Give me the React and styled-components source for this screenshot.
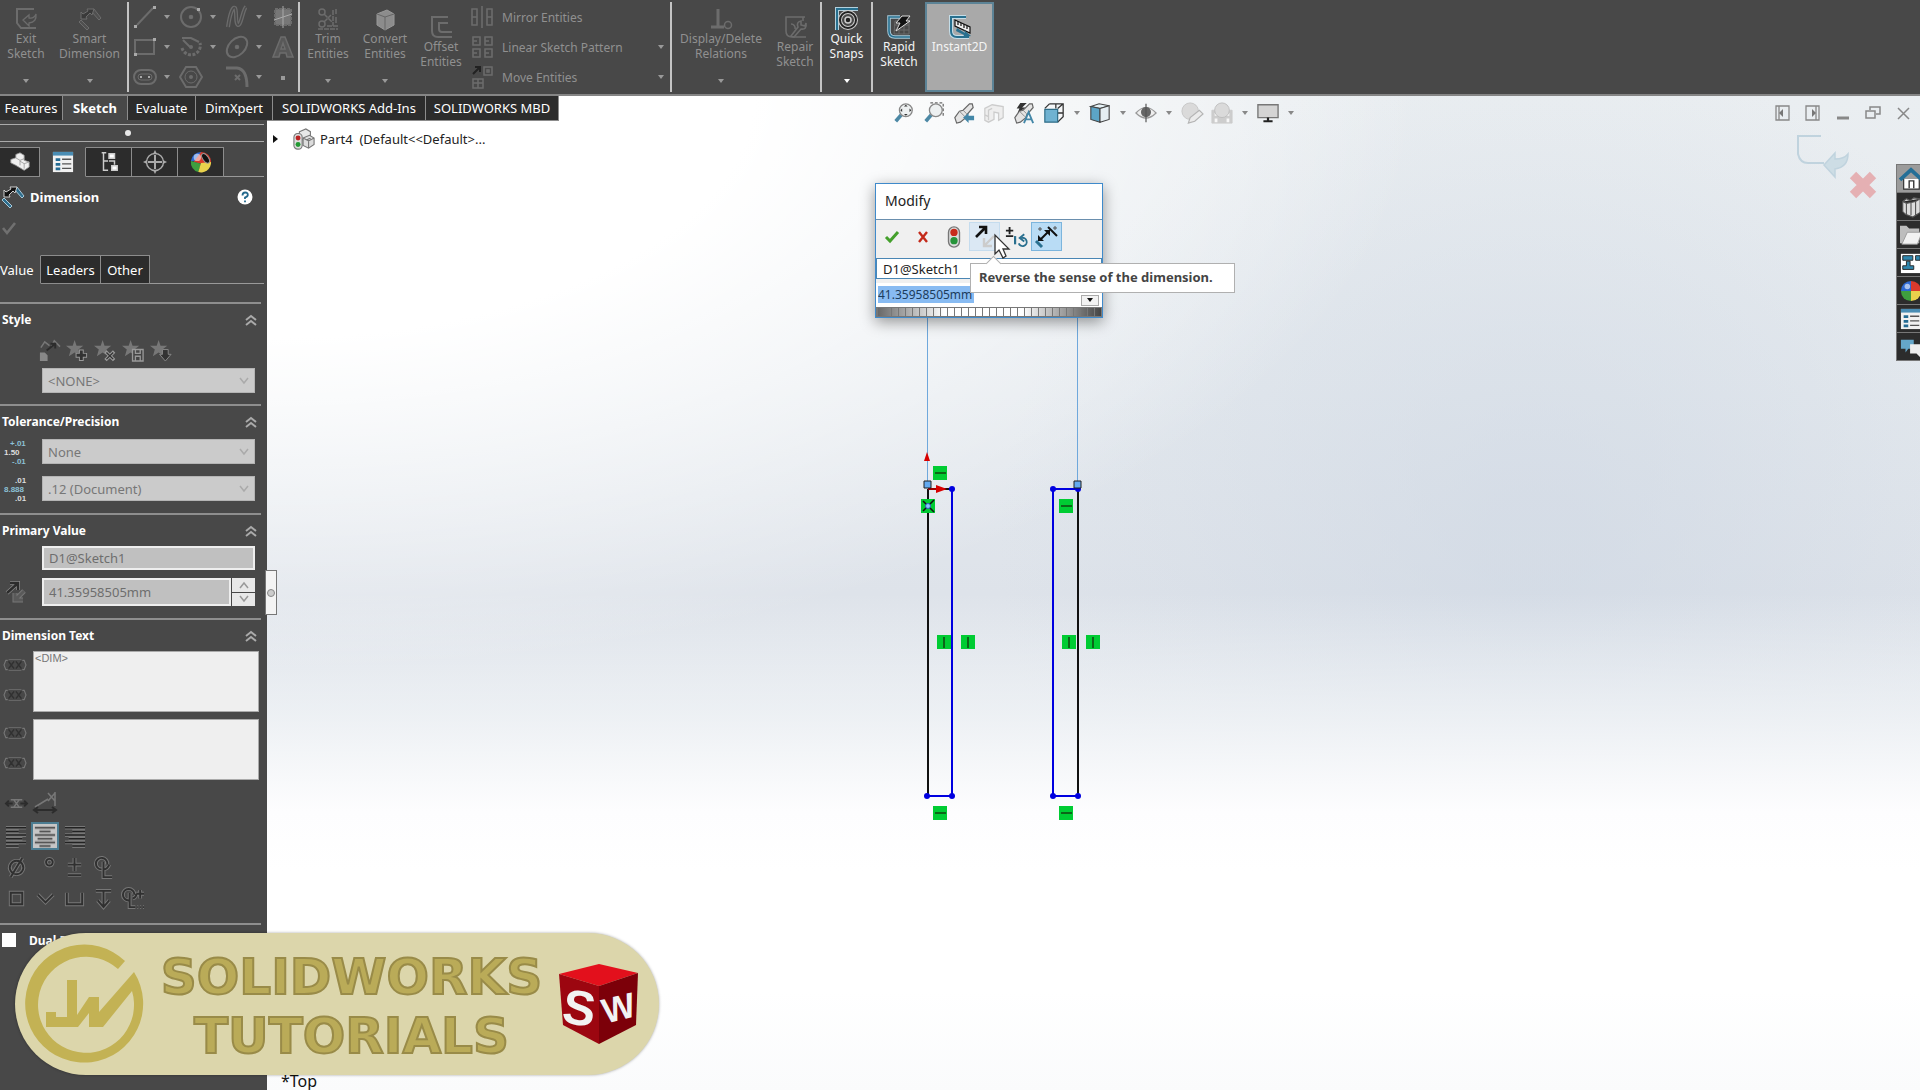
import React from "react";
import styled, { createGlobalStyle } from "styled-components";

const GlobalStyle = createGlobalStyle`
  * {
    box-sizing: border-box;
  }

  body {
    margin: 0;
    overflow: hidden;
    font-family: "Noto Sans", "Open Sans", sans-serif;
    font-size: 13px;
    color: #fff;
  }

  button {
    padding: 0;
    border: 0;
    background: none;
    color: inherit;
    font: inherit;
  }

  svg {
    display: block;
    flex: none;
    overflow: visible;
  }
`;

const Page = styled.div`
  display: flex;
  flex-direction: column;
  min-height: 100vh;
  position: relative;
`;

/* ---------- ribbon ---------- */

const Ribbon = styled.header`
  display: flex;
  height: 96px;
  padding: 2px 0;
  background: #484848;
  border-bottom: 2px solid #858585;
  font-size: 12px;
  line-height: 15px;
`;

const Divider = styled.div`
  width: 2px;
  height: 90px;
  background: #c4c4c4;
`;

const BigTool = styled.button`
  display: flex;
  flex-direction: column;
  align-items: center;
  width: ${(p) => p.$width}px;
  height: 90px;
  padding-top: ${(p) => (p.$low ? 13 : 5)}px;
  color: ${(p) => (p.$enabled ? "#f4f4f4" : "#909090")};
  text-align: center;
  white-space: pre-line;
  ${(p) => p.$pressed && "background: #a9a9a9; border: 2px solid #5c8396; padding-top: 11px;"}
`;

const BigToolArrow = styled.span`
  display: flex;
  margin-top: auto;
  padding-bottom: 8px;
`;

const ToolGrid = styled.div`
  display: grid;
  grid-template-columns: 46px 46px 46px 28px;
  grid-template-rows: repeat(3, 30px);
  width: 169px;
  padding-left: 4px;
`;

const GridTool = styled.button`
  display: flex;
  align-items: center;
  gap: 6px;
`;

const ToolList = styled.div`
  display: grid;
  grid-template-rows: repeat(3, 30px);
  width: 202px;
  padding-left: 2px;
`;

const ListTool = styled.button`
  display: flex;
  align-items: center;
  gap: 8px;
  padding-right: 5px;
  color: #909090;

  & > span {
    flex: 1;
    text-align: left;
  }
`;

/* ---------- command tabs and heads-up toolbar ---------- */

const Main = styled.main`
  flex: 1;
  display: flex;
  flex-direction: column;
  background:
    radial-gradient(ellipse 60% 58% at 14% 0%, #fff 42%, rgba(255, 255, 255, 0) 100%),
    linear-gradient(180deg, rgba(255, 255, 255, 0) 50%, rgba(240, 243, 246, 0.8) 62%, #fdfdfe 72%, #fff 78%, #fff 90%, #fafbfc 100%),
    radial-gradient(ellipse 28% 50% at 80% 45%, rgba(206, 215, 227, 0.6) 10%, rgba(206, 215, 227, 0) 100%),
    linear-gradient(180deg, #eaeef1 0%, #e4e9ee 30%, #dee3ea 50%, #e0e5eb 100%);
`;

const TopRow = styled.div`
  display: grid;
  grid-template-columns: 267px 1fr;
  height: 24px;
`;

const CommandTabs = styled.nav`
  display: flex;
  width: max-content;
  height: 25px;
  position: relative;
`;

const CommandTab = styled.button`
  width: ${(p) => p.$width}px;
  border: 1px solid #8c8c8c;
  border-width: 0 1px 1px 0;
  background: ${(p) => (p.$active ? "#484848" : "#2c2c2c")};
  border-bottom-color: ${(p) => (p.$active ? "#484848" : "#8c8c8c")};
  font-weight: ${(p) => (p.$active ? 700 : 400)};
  white-space: nowrap;
`;

const ViewBar = styled.div`
  display: grid;
  grid-template-columns: 1fr auto 1fr;
  padding-top: 6px;
  height: 28px;
`;

const HeadsUp = styled.div`
  grid-column: 2;
  display: flex;
  align-items: center;
  gap: 8px;
  height: 22px;
`;

const HeadsUpButton = styled.button`
  display: flex;
  align-items: center;
  gap: 8px;
`;

const WindowButtons = styled.div`
  display: flex;
  align-items: center;
  justify-content: flex-end;
  gap: 12px;
  height: 22px;
  padding-right: 8px;
`;

const Workspace = styled.div`
  flex: 1;
  display: flex;
`;

/* ---------- property manager ---------- */

const Panel = styled.aside`
  position: relative;
  width: 267px;
  padding-top: 4px;
  background: #484848;
`;

const Grip = styled.div`
  display: flex;
  align-items: center;
  justify-content: center;
  height: 18px;
  margin: 0 3px 5px 0;
  padding-right: 8px;
  border: solid #aaa;
  border-width: 1px 0;

  &::after {
    content: "";
    width: 6px;
    height: 6px;
    border-radius: 50%;
    background: #e8e8e8;
  }
`;

const TabStrip = styled.div`
  display: flex;
  height: ${(p) => p.$height}px;
  margin-right: 3px;

  &::after {
    content: "";
    flex: 1;
    border-bottom: 1px solid #999;
  }
`;

const PanelTab = styled.button`
  display: flex;
  align-items: center;
  justify-content: center;
  width: ${(p) => p.$width}px;
  border: 1px solid #8c8c8c;
  border-left: 0;
  background: ${(p) => (p.$active ? "#484848" : "#2c2c2c")};
  ${(p) => p.$active && "border-top-color: transparent; border-bottom-color: transparent;"}
`;

const ValueTab = styled(PanelTab)`
  ${(p) => p.$active && "justify-content: flex-start;"}
`;

const TitleRow = styled.div`
  display: flex;
  align-items: center;
  gap: 5px;
  height: 40px;
  padding: 0 14px 0 1px;
  font-weight: 700;

  h2 {
    flex: 1;
    margin: 0;
    font-size: 13px;
  }
`;

const ConfirmRow = styled.div`
  height: 38px;
  padding: 4px 2px;
`;

const Section = styled.section`
  margin-right: 6px;
  height: ${(p) => p.$height}px;
  border-top: 2px solid #8e8e8e;
`;

const SectionHead = styled.button`
  display: flex;
  align-items: center;
  justify-content: space-between;
  width: 100%;
  height: 31px;
  padding: 0 2px;
  font-size: 12px;
  font-weight: 700;
`;

const IconRow = styled.div`
  display: flex;
  align-items: center;
  gap: ${(p) => p.$gap || 5}px;
  height: ${(p) => p.$height || 30}px;
  padding-left: ${(p) => p.$indent || 0}px;
`;

const Field = styled.div`
  display: flex;
  align-items: center;
  gap: 14px;
  margin: ${(p) => p.$before || 0}px 6px ${(p) => p.$after || 12}px 4px;

  & > svg {
    width: 24px;
  }
`;

const SelectBox = styled.div`
  position: relative;
  flex: 1;

  svg {
    position: absolute;
    right: 5px;
    top: 9px;
    pointer-events: none;
  }
`;

const Select = styled.select`
  display: block;
  width: 100%;
  height: 25px;
  padding: 0 5px;
  appearance: none;
  border: 1px solid #b4b4b4;
  border-radius: 0;
  background: #cbcbcb;
  color: #777;
  font: inherit;
`;

const ValueInput = styled.input`
  flex: 1;
  min-width: 0;
  width: 100%;
  height: ${(p) => (p.$tall ? 28 : 24)}px;
  padding: 0 5px;
  border: 2px solid #eee;
  background: #c0c0c0;
  color: #6e6e6e;
  font: inherit;
`;

const Spinner = styled.div`
  display: flex;
  flex: 1;
`;

const SpinButtons = styled.div`
  display: flex;
  flex-direction: column;
  gap: 1px;
  width: 24px;
  padding-left: 1px;

  button {
    display: flex;
    flex: 1;
    align-items: center;
    justify-content: center;
    background: #e8e8e8;
  }
`;

const TextBlock = styled.div`
  display: flex;
  gap: 7px;
  height: 61px;
  margin: 0 2px 7px 4px;
`;

const TextBlockIcons = styled.div`
  display: flex;
  flex-direction: column;
  gap: 8px;
  width: 22px;
  padding-top: 3px;
`;

const DimTextArea = styled.textarea`
  flex: 1;
  min-width: 0;
  padding: 0 1px;
  resize: none;
  border: 1px solid #aaa;
  background: #efefef;
  color: #777;
  font: 11px/13px "Liberation Sans", Arial, sans-serif;
`;

const SymbolButton = styled.button`
  display: flex;
  align-items: center;
  justify-content: center;
  width: ${(p) => p.$width || 24}px;
  height: 28px;
  ${(p) => p.$pressed && "background: #c6c6c6; border: 2px solid #4c7d92;"}
`;

const CheckLabel = styled.label`
  display: flex;
  align-items: center;
  gap: 13px;
  height: 30px;
  padding-left: 2px;
  font-size: 12px;
  font-weight: 700;

  input {
    width: 14px;
    height: 14px;
    margin: 0;
    appearance: none;
    background: #fff;
  }
`;

const PanelHandle = styled.button`
  position: absolute;
  top: 450px;
  right: -10px;
  z-index: 1;
  display: flex;
  align-items: center;
  justify-content: center;
  width: 12px;
  height: 45px;
  border: 1px solid #777;
  background: #f4f4f4;

  &::after {
    content: "";
    width: 6px;
    height: 6px;
    border: 1px solid #888;
    border-radius: 50%;
    background: #ccc;
  }
`;

/* ---------- graphics area ---------- */

const Viewport = styled.div`
  position: relative;
  flex: 1;
`;

const TreeRoot = styled.button`
  display: flex;
  align-items: center;
  height: 38px;
  padding-left: 6px;
  color: #222;
  white-space: pre;

  span {
    padding-left: 5px;
  }

  svg + svg {
    margin-left: 14px;
  }
`;

const SketchDrawing = styled.svg`
  position: absolute;
  left: 633px;
  top: 190px;
`;

const ViewName = styled.div`
  position: absolute;
  left: 14px;
  bottom: 0;
  color: #111;
  font-size: 16px;
  line-height: 18px;
`;

const ConfirmCorner = styled.div`
  position: absolute;
  right: 42px;
  top: 14px;
`;

const TaskPane = styled.div`
  position: absolute;
  right: 0;
  top: 44px;
  width: 24px;
  border: 1px solid #777;
  border-right: 0;
  background: #777;
  display: grid;
  gap: 1px;
`;

const TaskButton = styled.button`
  display: flex;
  align-items: center;
  height: 27px;
  padding-left: 3px;
  overflow: hidden;
  background: ${(p) => (p.$active ? "#9b9b9b" : "#2c2c2c")};
`;

const Dialog = styled.form`
  position: absolute;
  left: 608px;
  top: 63px;
  width: 228px;
  border: 1px solid #3f8acb;
  background: #f0f0f0;
  box-shadow: 0 4px 14px rgba(0, 0, 0, 0.4);
  color: #222;
`;

const DialogTitle = styled.div`
  height: 36px;
  padding-left: 9px;
  border-bottom: 1px solid #6a8fae;
  background: #fff;
  font-size: 14px;
  line-height: 34px;
`;

const DialogTools = styled.div`
  display: flex;
  align-items: center;
  height: 38px;
  padding-bottom: 5px;
`;

const DialogTool = styled.button`
  display: flex;
  align-items: center;
  justify-content: center;
  width: 31px;
  height: 29px;
  background: ${(p) => p.$fill || "none"};
  border: 1px solid ${(p) => p.$edge || "transparent"};
`;

const DialogInput = styled.input`
  display: block;
  width: 100%;
  height: 21px;
  padding: 0 6px;
  border: 1px solid #4a86b4;
  background: #fff;
  color: #222;
  font: inherit;
  line-height: 19px;
`;

const ValueRow = styled.div`
  display: flex;
  align-items: flex-end;
  height: 24px;
  margin-top: 4px;
  background: #fff;
`;

const SelectedInput = styled.input`
  width: 96px;
  height: 17px;
  margin: 0 auto 4px 2px;
  padding: 0;
  border: 0;
  background: #88bbf2;
  color: #1c3c5c;
  font: inherit;
  font-size: 12px;
`;

const DropButton = styled.button`
  display: flex;
  align-items: center;
  justify-content: center;
  width: 18px;
  height: 11px;
  margin: 0 3px 1px 0;
  border: 1px solid #aaa;
  background: #f2f2f2;
`;

const Thumbwheel = styled.div`
  height: 10px;
  border: 1px solid #777;
  background:
    repeating-linear-gradient(90deg, #777 0 1px, transparent 1px 7px),
    linear-gradient(90deg, #666, #fff 30%, #fff 65%, #444);
`;

const Tooltip = styled.div`
  position: absolute;
  left: 703px;
  top: 143px;
  width: 265px;
  height: 30px;
  padding-left: 8px;
  border: 1px solid #b0b0b0;
  background: #fff;
  color: #444;
  font-size: 13px;
  font-weight: 700;
  line-height: 26px;
  white-space: nowrap;

  &::before {
    content: "";
    position: absolute;
    left: 17px;
    top: -6px;
    width: 10px;
    height: 10px;
    border: solid #b0b0b0;
    border-width: 1px 0 0 1px;
    background: #fff;
    transform: rotate(45deg);
  }
`;

const Cursor = styled.svg`
  position: absolute;
  left: 727px;
  top: 114px;
`;

/* ---------- channel banner ---------- */

const Banner = styled.div`
  position: absolute;
  left: 15px;
  bottom: 15px;
  z-index: 2;
  display: flex;
  align-items: center;
  width: 644px;
  height: 142px;
  padding: 0 18px 0 11px;
  border-radius: 71px;
  background: #dcd6ab;
  box-shadow: 0 0 3px rgba(0, 0, 0, 0.35);
`;

const BannerText = styled.div`
  flex: 1;
  padding-top: 6px;
  color: #baab58;
  font: 700 50px/59px "DejaVu Sans", sans-serif;
  text-align: center;
  -webkit-text-stroke: 2px #998b48;
`;

/* ---------- icons ---------- */

const Icon = ({ size = 24, w, h, box = "0 0 24 24", color = "#777", line = 2, children }) => (
  <svg
    width={w || size}
    height={h || size}
    viewBox={box}
    fill="none"
    stroke={color}
    strokeWidth={line}
    aria-hidden="true"
  >
    {children}
  </svg>
);

const Caret = ({ color = "#999" }) => (
  <Icon w={8} h={5} box="0 0 8 5">
    <path d="M1 0h6L4 4z" fill={color} stroke="none" />
  </Icon>
);

const Collapse = () => (
  <Icon w={16} h={14} box="0 0 16 14" color="#aaa" line={2}>
    <path d="M3 7l5-4 5 4M3 12l5-4 5 4" />
  </Icon>
);

const Chevron = ({ up, color = "#aaa" }) => (
  <Icon w={12} h={8} box="0 0 12 8" color={color} line={1.5}>
    <path d={up ? "M2 7l4-5 4 5" : "M2 1l4 5 4-5"} />
  </Icon>
);

const dim = "#6c6c6c";

const ExitIcon = () => (
  <Icon color={dim}>
    <path d="M20 2H3v14l4 5h15" />
    <path d="M9 13l6-5v3q5 1 7-4 1 8-7 9v3z" strokeWidth="1.3" />
  </Icon>
);

const DimensionIcon = ({ blue }) => (
  <Icon color={blue ? "#a9c9da" : dim} line={1}>
    <path d="M1 15l2-2 8 8-2 2zM13 4l3-2 7 9-2 2z" fill={blue ? "#2d6d8c" : "#505050"} />
    <path
      d="M3 12V5l2 2 5-3-1-2h7l-2 6-2-2-4 4 1 2z"
      fill={blue ? "#111" : "#3a3a3a"}
      stroke={blue ? "#ccc" : "#6c6c6c"}
    />
  </Icon>
);

const gridIcons = [
  ["Line", true, <><path d="M4 20L20 3" /><path d="M1 20h3v3H1zM20 1h3v3h-3z" fill="#aaa" stroke="none" /></>],
  ["Circle", true, <><circle cx="12" cy="12" r="10" /><circle cx="12" cy="12" r="1.3" fill="#aaa" /><path d="M18 3h3v3h-3z" fill="#aaa" stroke="none" /></>],
  ["Spline", true, <><path d="M3 22C5 8 8 1 10 3s0 16 3 17S18 4 21 2" strokeWidth="4" /><path d="M3 22C5 8 8 1 10 3s0 16 3 17S18 4 21 2" stroke="#4c4c4c" strokeWidth="1.5" /></>],
  ["Sketch plane", false, <><path d="M4 4h16v16H4z" fill="#777" strokeDasharray="3 1" /><path d="M12 1v22M3 15l18-6" stroke="#aaa" strokeWidth="1" /></>],
  ["Rectangle", true, <><path d="M2 5h19v14H2z" /><path d="M1 18h3v3H1zM20 3h3v3h-3z" fill="#aaa" stroke="none" /></>],
  ["Arc", true, <><path d="M3 13a9 9 0 1 0 18-5" strokeDasharray="3 1.5" strokeWidth="3" /><path d="M3 3h9l8 4M4 5l7 7" /><circle cx="12" cy="12" r="1" /></>],
  ["Ellipse", true, <><ellipse cx="12" cy="12" rx="12" ry="8" transform="rotate(-45 12 12)" /><circle cx="12" cy="12" r="1.3" fill="#aaa" /></>],
  ["Text", false, <path d="M2 22l8-20h4l8 20h-6l-1-4H9l-1 4zM10 14h4l-2-6z" fill="#585858" strokeWidth="1.5" />],
  ["Slot", true, <><rect x="1" y="5" width="22" height="14" rx="7" /><rect x="5" y="9" width="14" height="6" rx="3" strokeWidth="1" /><path d="M7 12h2M15 12h2" stroke="#aaa" /></>],
  ["Polygon", false, <><path d="M7 2h10l6 10-6 10H7L1 12z" /><circle cx="12" cy="12" r="6" strokeWidth="1" /><circle cx="12" cy="12" r="1" fill="#aaa" /></>],
  ["Fillet", true, <><path d="M1 3h11q10 1 10 19" strokeWidth="3" /><path d="M10 10l5 5m0-5l-5 5" /></>],
  ["Point", false, <path d="M10 11h4v4h-4z" fill="#999" stroke="none" />],
];

const listIcons = [
  ["Mirror Entities", false, <path d="M12 1v22M2 4h5v16H2zM2 12h5M22 4h-5v16h5zM22 12h-5" strokeWidth="1.6" />],
  ["Linear Sketch Pattern", true, <path d="M10 2H3v8h7zM3 6h4M22 2h-7v8h7zM15 6h4M10 14H3v8h7zM3 18h4M22 14h-7v8h7zM15 18h4" strokeWidth="1.6" />],
  ["Move Entities", true, <><path d="M3 9l7-7M5 2h5v5" stroke="#222" /><path d="M14 2h8v8h-8zM17 5h2v2h-2zM3 14h10v9H3zM3 18h10M8 14v9" strokeWidth="1.5" /></>],
];

const commandTabs = [
  ["Features", 63],
  ["Sketch", 65],
  ["Evaluate", 68],
  ["DimXpert", 77],
  ["SOLIDWORKS Add-Ins", 153],
  ["SOLIDWORKS MBD", 133],
];

const Lens = () => (
  <>
    <path d="M9 14l-6 7" stroke="#4c88a5" strokeWidth="4" />
    <circle cx="14" cy="9" r="7" fill="#edf0f1" stroke="#888" strokeWidth="1.4" />
  </>
);

const Telescope = () => (
  <>
    <path d="M2 17l5-7 4-1 7-7h3l1 4-7 8-1 3-6 5-4 1z" fill="#e4e4e4" stroke="#666" strokeWidth="1.3" />
    <path d="M7 10l6 6M11 9l4 4" stroke="#888" strokeWidth="1" />
  </>
);

const headsUpIcons = [
  ["Zoom to fit", false, <><Lens /><path d="M14 3l2 2h-4zM14 15l2-2h-4zM8 9l2-2v4zM20 9l-2-2v4z" fill="#333" stroke="none" /></>],
  ["Zoom to area", false, <><path d="M8 1h14v15" stroke="#333" strokeWidth="1" strokeDasharray="3 2" /><Lens /></>],
  ["Previous view", false, <><Telescope /><path d="M11 17l6-5v3h6v5h-6v3z" fill="#4387a8" stroke="none" /></>],
  ["Section view", false, <path d="M2 7l8-4 12 2v12l-5 3v-8l-5-1v8l-6 3-4-2zM2 14l4 2m0 4V9l4-2" fill="#eee" stroke="#ccc" strokeWidth="1.4" />],
  ["View annotations", false, <><path d="M8 1h7l-5 5h4l-9 6 2-5H4z" fill="#333" stroke="none" /><Telescope /><path d="M12 23l5-12 5 12M14 19h6" stroke="#4387a8" /></>],
  ["View orientation", true, <><path d="M7 2h15v14l-6 6M7 2L2 7M22 2l-6 5M14 2v5M16 12h6" stroke="#333" strokeWidth="1.4" /><path d="M2 8h14v14H2z" fill="#70b2d1" stroke="#2e6c87" strokeWidth="1.3" /></>],
  ["Display style", true, <><path d="M2 5l9-3 11 2-10 3z" fill="#e6f2f7" stroke="#444" strokeWidth="1.2" /><path d="M2 5l10 2v15L2 19z" fill="#5ca4c6" stroke="#444" strokeWidth="1.2" /><path d="M12 7l10-3v15l-10 3z" fill="#e5eef3" stroke="#444" strokeWidth="1.2" /></>],
  ["Hide or show items", true, <><path d="M1 12q11-12 22 0-11 11-22 0z" fill="#eee" stroke="#999" strokeWidth="1.3" /><circle cx="12" cy="11" r="5.5" fill="#666" stroke="none" /><path d="M12 2v20" stroke="#555" strokeWidth="1.3" /></>],
  ["Edit appearance", false, <><circle cx="10" cy="10" r="9" fill="#dadada" stroke="#c6c6c6" strokeWidth="1" /><path d="M8 23l2-6 10-8 4 4-9 8z" fill="#ebebeb" stroke="#b4b4b4" strokeWidth="1.3" /></>],
  ["Apply scene", true, <><path d="M1 9h22v14H1z" fill="#cdcdcd" stroke="#ccc" strokeWidth="1" /><path d="M4 12h3v3H4zM17 12h3v3h-3zM4 18h3v4H4zM17 18h3v4h-3z" fill="#f7f7f7" stroke="none" /><circle cx="12" cy="9" r="8" fill="#dadada" stroke="#bdbdbd" strokeWidth="1" /></>],
  ["View settings", true, <><path d="M1 3h22v14H1z" fill="#d4d4d4" stroke="#777" strokeWidth="1.5" /><path d="M12 17v4M7 21h10" stroke="#222" strokeWidth="2.4" /></>],
];

const Ball = () => (
  <Icon size={22} line={0}>
    <path d="M12 12V1A11 11 0 0 0 1 12z" fill="#2d68d2" />
    <path d="M12 12V1a11 11 0 0 1 11 11z" fill="#d93a2c" />
    <path d="M12 12H1a11 11 0 0 0 11 11z" fill="#3f9e3f" />
    <path d="M12 12h11a11 11 0 0 1-11 11z" fill="#e9d24c" />
    <circle cx="8" cy="7" r="3" fill="#fff" opacity=".6" />
  </Icon>
);

const DisplayBall = () => (
  <Icon size={22} line={0}>
    <path d="M12 12L12 1A11 11 0 0 0 1 11z" fill="#2d68d2" />
    <path d="M12 1a11 11 0 0 1 11 11l-11 2-8-2z" fill="#d93a2c" />
    <path d="M12 14L1 11a11 11 0 0 0 8 12z" fill="#3f9e3f" />
    <path d="M12 13l11-1a11 11 0 0 1-14 11z" fill="#e9d24c" />
    <circle cx="8" cy="7" r="4" fill="#fff" opacity=".55" />
    <ellipse cx="17" cy="8" rx="3" ry="6" fill="#111" stroke="#999" strokeWidth="1" transform="rotate(-35 17 8)" />
  </Icon>
);

const ListIcon = () => (
  <Icon size={22} line={0}>
    <path d="M1 1h22v22H1z" fill="#f1f1f1" />
    <path d="M1 1h22v4H1z" fill="#4a8db4" />
    <path d="M4 8h5v3H4zM4 13h5v3H4zM4 18h5v3H4z" fill="#246b93" />
    <path d="M11 9h10M11 14h10M11 19h10" stroke="#555" strokeWidth="1.5" />
  </Icon>
);

const panelTabs = [
  ["Design tree", 40, <Icon size={20} color="#999" line={1}><path d="M1 9l6-2V3l5-2 5 3v6l6 2v6l-6 4-10-6-6-3z" fill="#efefef" /><path d="M7 7l5 3v6M12 10l5-2M17 20v-6l6-2M17 14l-5-3" /></Icon>],
  ["Properties", 46, <ListIcon />],
  ["Configurations", 46, <Icon size={22} color="#ccc" line={1.6}><path d="M4 2h5M6 2v19h5M6 11h5" /><path d="M12 3h6v5h-6zM15 16h6v5h-6z" fill="#fff" /><path d="M12 11h6v4" /></Icon>],
  ["DimXpert manager", 46, <Icon size={24} color="#aaa" line={1.4}><circle cx="12" cy="12" r="8.5" /><path d="M12 5v14M5 12h14" strokeWidth="2" /><path d="M12 0l2 4h-4zM12 24l2-4h-4zM0 12l4-2v4zM24 12l-4-2v4z" fill="#aaa" stroke="none" /></Icon>],
  ["Display manager", 46, <DisplayBall />],
];

const star = "M9 1l2 6h7l-5 4 2 7-6-4-6 4 2-7-5-4h7z";

const styleIcons = [
  ["Apply default", <><path d="M3 9l4-6 5 4M14 8l3-6 6 6" strokeWidth="1.6" /><path d="M9 12l9-7M13 5h5v5" stroke="#2c2c2c" /><path d="M2 14h5l3 3v6H2z" fill="#888" stroke="none" /></>],
  ["Add style", <><path d={star} fill="#777" stroke="none" /><path d="M16 11v12M10 17h12" stroke="#999" strokeWidth="5" /><path d="M16 12v10M11 17h10" stroke="#333" strokeWidth="3" /></>],
  ["Delete style", <><path d={star} fill="#777" stroke="none" /><path d="M12 13l9 9m0-9l-9 9" stroke="#999" strokeWidth="3.5" /><path d="M13 14l7 7m0-7l-7 7" stroke="#333" strokeWidth="1.4" /></>],
  ["Save style", <><path d={star} fill="#777" stroke="none" /><path d="M11 11h11v12H11zM14 11v4h5v-4M14 23v-5h5v5" fill="#444" stroke="#999" strokeWidth="1.4" /></>],
  ["Load style", <><path d={star} fill="#777" stroke="none" /><path d="M13 11h6v5h3l-6 7-6-7h3z" fill="#333" stroke="#888" strokeWidth="1" /></>],
];

const BracketIcon = () => (
  <Icon size={22} line={1.2}>
    <path d="M4 7H2L0 12l2 5h2M20 7h2l2 5-2 5h-2" />
    <path d="M5 8l6 8m0-8l-6 8M13 8l6 8m0-8l-6 8" stroke="#303030" strokeWidth="1.6" />
    <path d="M5 6h14M5 18h14" stroke="#666" />
  </Icon>
);

const alignIcons = [
  ["Align left", false, "M1 3h22M1 7h14M1 11h22M1 15h18M1 19h22M1 23h14"],
  ["Align centre", true, "M1 3h22M6 7h12M1 11h22M4 15h16M1 19h22M6 23h12"],
  ["Align right", false, "M1 3h22M9 7h14M1 11h22M5 15h18M1 19h22M9 23h14"],
];

const symbolRows = [
  [
    ["Diameter", "M12 5a7 7 0 1 0 .1 0zM6 22L18 2"],
    ["Degree", "M16 3a3.5 3.5 0 1 0 .1 0z"],
    ["Plus minus", "M12 2v14M5 9h14M5 20h14"],
    ["Centerline", "M16 9a6 6 0 1 0-6 5M12 6v16h9M12 14q4 0 6-5"],
  ],
  [
    ["Square", "M6 6h12v12H6z"],
    ["Countersink", "M4 8l8 8 8-8"],
    ["Counterbore", "M4 6v12h16V6"],
    ["Depth", "M4 4h16M12 4v17M6 14l6 7 6-7"],
    ["More symbols", "M14 8a6 6 0 1 0-6 6M9 6v15h6M12 12q4-1 4-5M20 3v9M16 7h8M17 21h1M20 21h1M23 21h1"],
  ],
];

const Symbol = ({ d }) => (
  <Icon size={23}>
    <path d={d} stroke="#777" strokeWidth="4" />
    <path d={d} stroke="#303030" strokeWidth="2" />
  </Icon>
);

const taskIcons = [
  ["Home", <><path d="M4 12v11h17V12" fill="#fff" stroke="#333" strokeWidth="1.3" /><path d="M0 13L12 2l12 11" stroke="#246f97" strokeWidth="4" /><path d="M10 22v-8h5v8" stroke="#333" strokeWidth="1.5" /></>],
  ["Library", <path d="M3 6l4-3 4 2 4-3 7 1v15l-8 5-8-3-3-3zM7 8v12M12 7v14M17 6v15M3 6l4 2 5-1 5-1 5-3" fill="#ddd" stroke="#555" strokeWidth="1.2" />],
  ["Explorer", <><path d="M0 2h7l3 3h11v16H0z" fill="#bdbdbd" stroke="none" /><path d="M8 9h16l-5 13H2z" fill="#f2f2f2" stroke="#999" strokeWidth="1" /></>],
  ["View palette", <><path d="M1 2h22v21H1z" fill="#fff" stroke="none" /><path d="M3 4h11v5H3zM17 4h5v5h-5zM7 10h4v5h4v4H3v-4h4z" fill="#2f86ad" stroke="#222" strokeWidth="1" /></>],
];

const ArrowsIcon = () => (
  <Icon>
    <path d="M20 11L12 19M11 13v7h8" stroke="#777" strokeWidth="5" />
    <path d="M20 11L12 19M11 13v7h8" stroke="#5a5a5a" strokeWidth="3" />
    <path d="M3 13L13 4M6 3h8v7" stroke="#888" strokeWidth="4" />
    <path d="M3 13L13 4M6 3h8v7" stroke="#2c2c2c" strokeWidth="2.4" />
  </Icon>
);

const LightIcon = ({ size = 22 }) => (
  <Icon size={size} color="#777" line={1.5}>
    <rect x="6" y="1" width="12" height="22" rx="6" fill="#ddd" />
    <circle cx="12" cy="7" r="4" fill="#c72c1c" stroke="none" />
    <circle cx="12" cy="16" r="4" fill="#26943a" stroke="none" />
  </Icon>
);

const ToolLabel = ({ label, width, low, enabled, pressed, arrow, icon }) => (
  <BigTool type="button" $width={width} $low={low} $enabled={enabled} $pressed={pressed}>
    {icon}
    {label}
    {arrow && (
      <BigToolArrow>
        <Caret color={enabled ? "#fff" : "#999"} />
      </BigToolArrow>
    )}
  </BigTool>
);

const RibbonBar = () => (
  <Ribbon>
    <ToolLabel label={"Exit\nSketch"} width={52} arrow icon={<ExitIcon />} />
    <ToolLabel label={"Smart\nDimension"} width={75} arrow icon={<DimensionIcon />} />
    <Divider />
    <ToolGrid>
      {gridIcons.map(([name, arrow, art]) => (
        <GridTool type="button" key={name} aria-label={name}>
          <Icon color={dim}>{art}</Icon>
          {arrow && <Caret />}
        </GridTool>
      ))}
    </ToolGrid>
    <Divider />
    <ToolLabel
      label={"Trim\nEntities"}
      width={56}
      arrow
      icon={
        <Icon color={dim} line={1.5}>
          <circle cx="6" cy="5" r="3" />
          <circle cx="6" cy="17" r="3" />
          <path d="M8 7l8 8M8 15l7-7M17 3v16M11 19h12M2 22h20" strokeDasharray="5 1" />
          <path d="M20 2v5M20 10v6" />
        </Icon>
      }
    />
    <ToolLabel
      label={"Convert\nEntities"}
      width={58}
      arrow
      icon={
        <Icon color="#999" line={1}>
          <path d="M4 7l10-4 7 4v11l-9 5-8-5z" fill="#8c8c8c" />
          <path d="M4 7l8 3v13M12 10l9-3" stroke="#666" />
        </Icon>
      }
    />
    <ToolLabel
      label={"Offset\nEntities"}
      width={54}
      low
      icon={
        <Icon color={dim}>
          <path d="M19 2H3v14q0 6 6 6h14" />
          <path d="M19 8H10v6q0 3 3 3h10" />
        </Icon>
      }
    />
    <ToolList>
      {listIcons.map(([name, arrow, art]) => (
        <ListTool type="button" key={name}>
          <Icon color={dim}>{art}</Icon>
          <span>{name}</span>
          {arrow && <Caret />}
        </ListTool>
      ))}
    </ToolList>
    <Divider />
    <ToolLabel
      label={"Display/Delete\nRelations"}
      width={98}
      arrow
      icon={
        <Icon color={dim}>
          <path d="M9 2v18M2 20h13" strokeWidth="3" />
          <circle cx="19" cy="18" r="3.5" strokeWidth="1.5" />
        </Icon>
      }
    />
    <ToolLabel
      label={"Repair\nSketch"}
      width={50}
      low
      icon={
        <Icon color={dim} line={1.6}>
          <path d="M22 2H3v14q0 6 6 6h14M20 2v4" />
          <path d="M8 21l7-9q-2-5 3-6v4l4 1 1-3q1 7-5 6l-7 8zM8 9a4 4 0 0 1 4 5" />
        </Icon>
      }
    />
    <Divider />
    <ToolLabel
      label={"Quick\nSnaps"}
      width={49}
      enabled
      arrow
      icon={
        <Icon>
          <path d="M2 23V2h21" stroke="#b3d0dd" strokeWidth="4" />
          <path d="M2 23V2h21" stroke="#28708f" />
          <circle cx="13" cy="13" r="8" stroke="#ccc" strokeWidth="4" />
          <circle cx="13" cy="13" r="8" stroke="#222" />
          <circle cx="13" cy="13" r="3" fill="#222" stroke="#ccc" strokeWidth="1.5" />
        </Icon>
      }
    />
    <Divider />
    <ToolLabel
      label={"Rapid\nSketch"}
      width={52}
      low
      enabled
      icon={
        <Icon>
          <path d="M8 6h14v13H7zM7 10h15M7 15h15M12 6v13M17 6v13" stroke="#6a6a6a" strokeWidth="1" />
          <path d="M13 2H2v14q0 6 6 6h15" stroke="#a8cada" strokeWidth="3.5" />
          <path d="M13 2H2v14q0 6 6 6h15" stroke="#28708f" strokeWidth="1.6" />
          <path d="M15 1h8l-4 5h4L9 16l4-8H9z" fill="#111" stroke="#ddd" strokeWidth="1" />
        </Icon>
      }
    />
    <ToolLabel
      label="Instant2D"
      width={69}
      low
      enabled
      pressed
      icon={
        <Icon>
          <path d="M18 2H3v14q0 6 6 6h12" stroke="#c4dde8" strokeWidth="4" />
          <path d="M18 2H3v14q0 6 6 6h12" stroke="#28708f" />
          <path d="M7 5l15 7v6L7 11z" fill="#eee" stroke="#111" strokeWidth="1.2" />
          <path d="M10 6v4M13 8v3M16 9v4M19 11v3" stroke="#111" strokeWidth="1.2" />
          <path d="M9 13l8 5-1-3 7 6-8 1 1-2-8-4z" fill="#28708f" stroke="none" />
        </Icon>
      }
    />
  </Ribbon>
);

const PropertyPanel = () => (
  <Panel>
    <Grip />
    <TabStrip $height={30}>
      {panelTabs.map(([name, width, art]) => (
        <PanelTab type="button" key={name} aria-label={name} $width={width} $active={name === "Properties"}>
          {art}
        </PanelTab>
      ))}
    </TabStrip>
    <TitleRow>
      <DimensionIcon blue />
      <h2>Dimension</h2>
      <button type="button" aria-label="Help">
        <Icon size={16} box="0 0 16 16">
          <circle cx="8" cy="8" r="7.5" fill="#fff" stroke="none" />
          <path d="M5.5 6.5q0-3 2.7-3t2.6 2.5q0 1.5-2.8 2.5v1.5M8 11.5v1.7" stroke="#22688c" strokeWidth="1.8" />
        </Icon>
      </button>
    </TitleRow>
    <ConfirmRow>
      <button type="button" aria-label="OK">
        <Icon w={14} h={14} box="0 0 14 14" color="#707070" line={2.6}>
          <path d="M1 7l4 5 8-10" />
        </Icon>
      </button>
    </ConfirmRow>
    <TabStrip $height={29}>
      <ValueTab type="button" $width={41} $active>
        Value
      </ValueTab>
      <ValueTab type="button" $width={60}>
        Leaders
      </ValueTab>
      <ValueTab type="button" $width={49}>
        Other
      </ValueTab>
    </TabStrip>

    <IconRow $height={18} />
    <Section $height={102}>
      <SectionHead type="button">
        Style
        <Collapse />
      </SectionHead>
      <IconRow $indent={38}>
        {styleIcons.map(([name, art]) => (
          <button type="button" key={name} aria-label={name}>
            <Icon size={23} color="#777">
              {art}
            </Icon>
          </button>
        ))}
      </IconRow>
      <Field $before={3}>
        <Icon />
        <SelectBox>
          <Select aria-label="Style" defaultValue="none">
            <option value="none">&lt;NONE&gt;</option>
          </Select>
          <Chevron />
        </SelectBox>
      </Field>
    </Section>

    <Section $height={109}>
      <SectionHead type="button">
        Tolerance/Precision
        <Collapse />
      </SectionHead>
      <Field $before={2}>
        <Icon>
          <g stroke="none" fontFamily="Liberation Sans" fontSize="8" fontWeight="700">
            <text x="6" y="6" fill="#8cc0d6">+.01</text>
            <text x="0" y="15" fill="#ddd">1.50</text>
            <text x="8" y="24" fill="#8cc0d6">-.01</text>
          </g>
        </Icon>
        <SelectBox>
          <Select aria-label="Tolerance type" defaultValue="none">
            <option value="none">None</option>
          </Select>
          <Chevron />
        </SelectBox>
      </Field>
      <Field>
        <Icon>
          <g stroke="none" fontFamily="Liberation Sans" fontSize="8" fontWeight="700">
            <text x="11" y="6" fill="#ddd">.01</text>
            <text x="0" y="15" fill="#8cc0d6">8.888</text>
            <text x="11" y="24" fill="#ddd">.01</text>
          </g>
        </Icon>
        <SelectBox>
          <Select aria-label="Precision" defaultValue="two">
            <option value="two">.12 (Document)</option>
          </Select>
          <Chevron />
        </SelectBox>
      </Field>
    </Section>

    <Section $height={105}>
      <SectionHead type="button">
        Primary Value
        <Collapse />
      </SectionHead>
      <Field $after={8}>
        <Icon />
        <ValueInput aria-label="Dimension name" defaultValue="D1@Sketch1" />
      </Field>
      <Field>
        <ArrowsIcon />
        <Spinner>
          <ValueInput aria-label="Dimension value" defaultValue="41.35958505mm" $tall />
          <SpinButtons>
            <button type="button" aria-label="Increase">
              <Chevron up color="#999" />
            </button>
            <button type="button" aria-label="Decrease">
              <Chevron color="#999" />
            </button>
          </SpinButtons>
        </Spinner>
      </Field>
    </Section>

    <Section $height={305}>
      <SectionHead type="button">
        Dimension Text
        <Collapse />
      </SectionHead>
      <TextBlock>
        <TextBlockIcons>
          <BracketIcon />
          <BracketIcon />
        </TextBlockIcons>
        <DimTextArea aria-label="Dimension text" defaultValue="<DIM>" />
      </TextBlock>
      <TextBlock>
        <TextBlockIcons>
          <BracketIcon />
          <BracketIcon />
        </TextBlockIcons>
        <DimTextArea aria-label="Text below" />
      </TextBlock>
      <IconRow $indent={4} $height={32}>
        <SymbolButton type="button" aria-label="Center dimension">
          <Icon size={23}>
            <path d="M6 8h12M6 16h12M9 8l6 8m0-8l-6 8" strokeWidth="1.5" />
            <path d="M1 12h7M16 12h7M4 9l-3 3 3 3M20 9l3 3-3 3" stroke="#2c2c2c" />
          </Icon>
        </SymbolButton>
        <SymbolButton type="button" aria-label="Offset text">
          <Icon size={24}>
            <path d="M2 16L15 8M15 2l7 8m0-8l-7 8M22 1v14" strokeWidth="1.6" />
            <path d="M1 19h22M5 16l-4 3 4 3M19 16l4 3-4 3" stroke="#2c2c2c" />
          </Icon>
        </SymbolButton>
      </IconRow>
      <IconRow $indent={3} $gap={3} $height={33}>
        {alignIcons.map(([name, pressed, d]) => (
          <SymbolButton type="button" key={name} aria-label={name} $width={pressed ? 28 : 25} $pressed={pressed}>
            <Icon size={22}>
              <path d={d} stroke={pressed ? "#aaa" : "#777"} strokeWidth="4" />
              <path d={d} stroke={pressed ? "#555" : "#222"} strokeWidth="1.6" />
            </Icon>
          </SymbolButton>
        ))}
      </IconRow>
      {symbolRows.map((row) => (
        <IconRow key={row[0][0]} $indent={4} $height={31}>
          {row.map(([name, d]) => (
            <SymbolButton type="button" key={name} aria-label={name}>
              <Symbol d={d} />
            </SymbolButton>
          ))}
        </IconRow>
      ))}
    </Section>
    <Section $height={40}>
      <CheckLabel>
        <input type="checkbox" />
        Dual Dimension
      </CheckLabel>
    </Section>
    <PanelHandle type="button" aria-label="Collapse panel" />
  </Panel>
);

const relations = [
  [933, 466, "h"],
  [937, 635, "v"],
  [961, 635, "v"],
  [933, 806, "h"],
  [1059, 499, "h"],
  [1062, 635, "v"],
  [1086, 635, "v"],
  [1059, 806, "h"],
];

const points = [
  [952, 489],
  [927, 796],
  [952, 796],
  [1053, 489],
  [1078, 489],
  [1053, 796],
  [1078, 796],
];

const Sketch = () => (
  <SketchDrawing width="220" height="520" viewBox="900 310 220 520" fill="none" aria-label="Sketch">
    <path d="M927.5 310v176M1077.5 310v176" stroke="#6fa8dc" />
    {relations.map(([x, y, kind]) => (
      <g key={`${x}-${y}`}>
        <rect x={x} y={y} width="14" height="14" fill="#00cc33" />
        <path d={kind === "h" ? `M${x + 2} ${y + 7}h11` : `M${x + 7} ${y + 2}v11`} stroke="#114411" strokeWidth="1.5" />
      </g>
    ))}
    <path d="M928 489v307M1078 489v307M928 489h24" stroke="#111" strokeWidth="2" />
    <path d="M952 489v307h-24M1078 489h-25v307h25" stroke="#0000e0" strokeWidth="2" />
    {points.map(([x, y]) => (
      <circle key={`${x}-${y}`} cx={x} cy={y} r="3" fill="#0000e0" />
    ))}
    <rect x="921" y="499" width="14" height="14" fill="#00cc33" />
    <path d="M923 511l11-11M923 501l11 11" stroke="#111" strokeWidth="1.5" />
    <circle cx="928" cy="506" r="2.5" fill="#8ac4ff" stroke="#2a60c0" />
    <path d="M928 489h10" stroke="#a00000" strokeWidth="2" />
    <path d="M936 485l11 4-11 4zM927 452l3 9h-6z" fill="#d80000" />
    <path d="M924 481h7v7h-7zM1074 481h7v7h-7z" fill="#64aaf0" stroke="#222" />
  </SketchDrawing>
);

const ModifyDialog = () => (
  <Dialog>
    <DialogTitle>Modify</DialogTitle>
    <DialogTools>
      <DialogTool type="button" aria-label="Save">
        <Icon size={14} box="0 0 14 14" color="#44a02c" line={3}>
          <path d="M1 7l4 4 8-9" />
        </Icon>
      </DialogTool>
      <DialogTool type="button" aria-label="Cancel">
        <Icon size={12} box="0 0 12 12" color="#c42a1a" line={2.4}>
          <path d="M2 1l8 10M10 1L2 11" />
        </Icon>
      </DialogTool>
      <DialogTool type="button" aria-label="Rebuild">
        <LightIcon />
      </DialogTool>
      <DialogTool type="button" aria-label="Reverse sense" $fill="#dbe8f4" $edge="#c5dcee">
        <Icon>
          <path d="M3 12L12 3M6 2h7v7" stroke="#111" strokeWidth="2.6" />
          <path d="M21 11l-9 9M11 13v8h8" stroke="#ccc" strokeWidth="2.4" />
        </Icon>
      </DialogTool>
      <DialogTool type="button" aria-label="Reset spin increment">
        <Icon size={22}>
          <path d="M5 1v8M1 5h8M1 11h8" stroke="#222" />
          <path d="M11 11v9" stroke="#2a708f" strokeWidth="2.4" />
          <path d="M15 19a4.5 4.5 0 1 0 3-6M21 9l-5 4 5 4" stroke="#2a708f" />
        </Icon>
      </DialogTool>
      <DialogTool type="button" aria-label="Mark dimension" $fill="#b9dcf5" $edge="#7cb5dd">
        <Icon>
          <path d="M1 16l6 6" stroke="#2a708f" strokeWidth="3" />
          <path d="M5 15l8-8M13 2l9 9" stroke="#111" />
          <path d="M3 16v-6l6 6zM9 5h6v6z" fill="#111" stroke="none" />
          <path d="M5 2v4M3 4h4M20 1v4M18 3h4" stroke="#555" strokeWidth="1" />
        </Icon>
      </DialogTool>
    </DialogTools>
    <DialogInput aria-label="Name" defaultValue="D1@Sketch1" />
    <ValueRow>
      <SelectedInput aria-label="Value" defaultValue="41.35958505mm" />
      <DropButton type="button" aria-label="Value options">
        <Caret color="#111" />
      </DropButton>
    </ValueRow>
    <Thumbwheel />
  </Dialog>
);

const GraphicsArea = () => (
  <Viewport>
    <TreeRoot type="button">
      <Icon w={6} h={10} box="0 0 6 10" line={0}>
        <path d="M0 1l5 4-5 4z" fill="#111" />
      </Icon>
      <Icon w={22} h={22} color="#777" line={1.2}>
        <path d="M7 4l7-3 5 3v7l-6 3-6-3z" fill="#e8e8e8" />
        <path d="M11 11l7-3 5 3v7l-6 4-6-3zM11 11l6 3 6-3M17 14v8" fill="#ddd" />
        <rect x="1" y="6" width="9" height="17" rx="4" fill="#ddd" />
        <circle cx="5.5" cy="11" r="2.7" fill="#b22" stroke="none" />
        <circle cx="5.5" cy="18" r="2.7" fill="#293" stroke="none" />
      </Icon>
      <span>{"Part4  (Default<<Default>..."}</span>
    </TreeRoot>
    <Sketch />
    <ModifyDialog />
    <Tooltip role="tooltip">Reverse the sense of the dimension.</Tooltip>
    <Cursor width="16" height="25" viewBox="0 0 16 25">
      <path d="M1 1v19l4-4 4 8 3-2-3-7h6z" fill="#fff" stroke="#333" strokeWidth="1.3" />
    </Cursor>
    <ConfirmCorner>
      <Icon w={82} h={66} box="0 0 82 66" color="#c0d3de">
        <path d="M25 2H2v18q2 9 10 9h16" />
        <path d="M28 31l11-12v6q9 0 13-5 0 13-13 15v8z" fill="#cddde5" strokeWidth="1.5" />
        <path d="M57 41l20 20M77 41L57 61" stroke="#e5b0b3" strokeWidth="9" />
      </Icon>
    </ConfirmCorner>
    <TaskPane>
      {taskIcons.map(([name, art]) => (
        <TaskButton type="button" key={name} aria-label={name} $active={name === "Home"}>
          <Icon size={22}>{art}</Icon>
        </TaskButton>
      ))}
      <TaskButton type="button" aria-label="Appearances">
        <Ball />
      </TaskButton>
      <TaskButton type="button" aria-label="Custom properties">
        <ListIcon />
      </TaskButton>
      <TaskButton type="button" aria-label="Forum">
        <Icon size={22} line={0}>
          <path d="M1 4h14v10H9l-3 4v-4H1z" fill="#65a6c9" />
          <path d="M11 9h13v10h-2v4l-4-4h-7z" fill="#eee" />
        </Icon>
      </TaskButton>
    </TaskPane>
    <ViewName>*Top</ViewName>
  </Viewport>
);

const ChannelBanner = () => (
  <Banner>
    <Icon w={120} h={120} box="25 944 120 120" line={0}>
      <path
        d="M124 961A59 59 0 1 0 133 972L98 1012V997H88L76 1015V980H66v37H55v-5H45v15h32l11-14v14h14l29-36A48 48 0 1 1 117 969z"
        fill="#c3b254"
      />
    </Icon>
    <BannerText>
      SOLIDWORKS
      <br />
      TUTORIALS
    </BannerText>
    <Icon w={84} h={84} box="558 964 84 84" line={0}>
      <path d="M560 976l40-10 39 9-39 13z" fill="#e3101c" />
      <path d="M560 976l40 12v58l-36-19z" fill="#9c0610" />
      <path d="M639 975l-39 13v58l37-19z" fill="#7c0009" />
      <g fill="#f2f2f2" fontFamily="Liberation Sans" fontWeight="700">
        <text x="564" y="1027" fontSize="49" transform="rotate(8 580 1010)">
          S
        </text>
        <text x="603" y="1022" fontSize="35" transform="rotate(-14 620 1010)">
          W
        </text>
      </g>
    </Icon>
  </Banner>
);

const App = () => (
  <Page>
    <GlobalStyle />
    <RibbonBar />
    <Main>
      <TopRow>
        <CommandTabs>
          {commandTabs.map(([name, width]) => (
            <CommandTab type="button" key={name} $width={width} $active={name === "Sketch"}>
              {name}
            </CommandTab>
          ))}
        </CommandTabs>
        <ViewBar>
          <HeadsUp>
            {headsUpIcons.map(([name, arrow, art]) => (
              <HeadsUpButton type="button" key={name} aria-label={name}>
                <Icon size={22}>{art}</Icon>
                {arrow && <Caret color="#888" />}
              </HeadsUpButton>
            ))}
          </HeadsUp>
          <WindowButtons>
            <button type="button" aria-label="Previous pane">
              <Icon size={18} box="0 0 18 18" color="#888" line={1.3}>
                <path d="M2 2h13v14H2zM5 2v14" />
                <path d="M9 5v8L5 9z" fill="#777" stroke="none" />
              </Icon>
            </button>
            <button type="button" aria-label="Next pane">
              <Icon size={18} box="0 0 18 18" color="#888" line={1.3}>
                <path d="M2 2h13v14H2zM12 2v14" />
                <path d="M8 5v8l4-4z" fill="#777" stroke="none" />
              </Icon>
            </button>
            <button type="button" aria-label="Minimize">
              <Icon size={18} box="0 0 18 18" color="#888" line={3}>
                <path d="M3 14h12" />
              </Icon>
            </button>
            <button type="button" aria-label="Restore">
              <Icon size={18} box="0 0 18 18" color="#888" line={1.5}>
                <path d="M6 6V3h10v7h-4M2 7h9v7H2z" />
              </Icon>
            </button>
            <button type="button" aria-label="Close">
              <Icon size={18} box="0 0 18 18" color="#888" line={1.5}>
                <path d="M4 4l11 11M15 4L4 15" />
              </Icon>
            </button>
          </WindowButtons>
        </ViewBar>
      </TopRow>
      <Workspace>
        <PropertyPanel />
        <GraphicsArea />
      </Workspace>
    </Main>
    <ChannelBanner />
  </Page>
);

export default App;
